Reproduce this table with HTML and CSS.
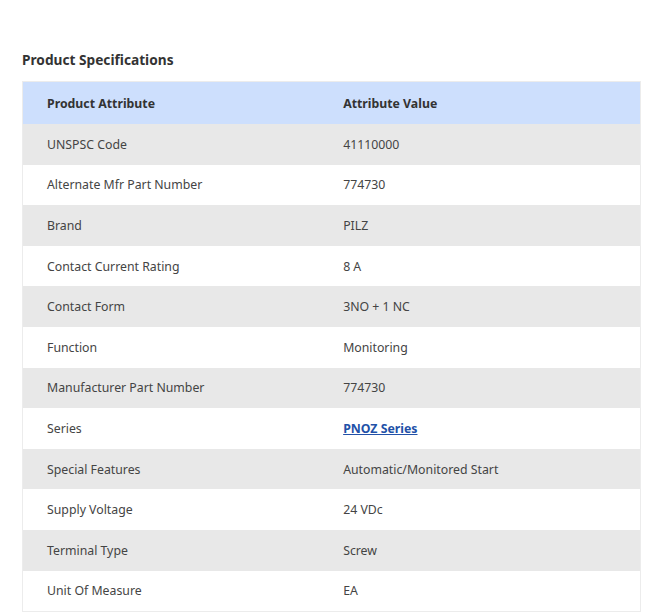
FILE: index.html
```html
<!DOCTYPE html>
<html>
<head>
<meta charset="utf-8">
<link rel="stylesheet" href="styles.css">
</head>
<body>
<section class="specs">
  <h2 class="specs-title">Product Specifications</h2>
  <table class="specs-table">
    <thead>
      <tr><th class="col-attr">Product Attribute</th><th>Attribute Value</th></tr>
    </thead>
    <tbody>
      <tr><td>UNSPSC Code</td><td>41110000</td></tr>
      <tr><td>Alternate Mfr Part Number</td><td>774730</td></tr>
      <tr><td>Brand</td><td>PILZ</td></tr>
      <tr><td>Contact Current Rating</td><td>8 A</td></tr>
      <tr><td>Contact Form</td><td>3NO + 1 NC</td></tr>
      <tr><td>Function</td><td>Monitoring</td></tr>
      <tr><td>Manufacturer Part Number</td><td>774730</td></tr>
      <tr><td>Series</td><td><a class="series-link" href="#">PNOZ Series</a></td></tr>
      <tr><td>Special Features</td><td>Automatic/Monitored Start</td></tr>
      <tr><td>Supply Voltage</td><td>24 VDc</td></tr>
      <tr><td>Terminal Type</td><td>Screw</td></tr>
      <tr><td>Unit Of Measure</td><td>EA</td></tr>
    </tbody>
  </table>
</section>
</body>
</html>
```
FILE: styles.css
```css
html, body {
  margin: 0;
  padding: 0;
  background: #ffffff;
}
body {
  font-family: "Noto Sans", "Open Sans", sans-serif;
  color: #3d3d3d;
}
.specs {
  padding: 50px 9px 0 22px;
}
.specs-title {
  margin: 0 0 12px 0;
  font-size: 13.7px;
  line-height: 19px;
  font-weight: 700;
  color: #333333;
}
.specs-table {
  width: 619px;
  border-collapse: collapse;
  border: 1px solid #ececec;
  font-size: 12.3px;
}
.specs-table th,
.specs-table td {
  text-align: left;
  padding: 0 10px 0 24px;
  vertical-align: middle;
}
.specs-table th {
  height: 42px;
  background: #cddffd;
  font-weight: 700;
  color: #333333;
}
.col-attr {
  width: 48%;
}
.specs-table td {
  height: 40.6px;
  box-sizing: border-box;
  color: #444444;
}
.specs-table tbody tr:nth-child(odd) td {
  background: #e8e8e8;
}
.series-link {
  color: #2251a8;
  font-weight: 700;
  text-decoration: underline;
}
```
